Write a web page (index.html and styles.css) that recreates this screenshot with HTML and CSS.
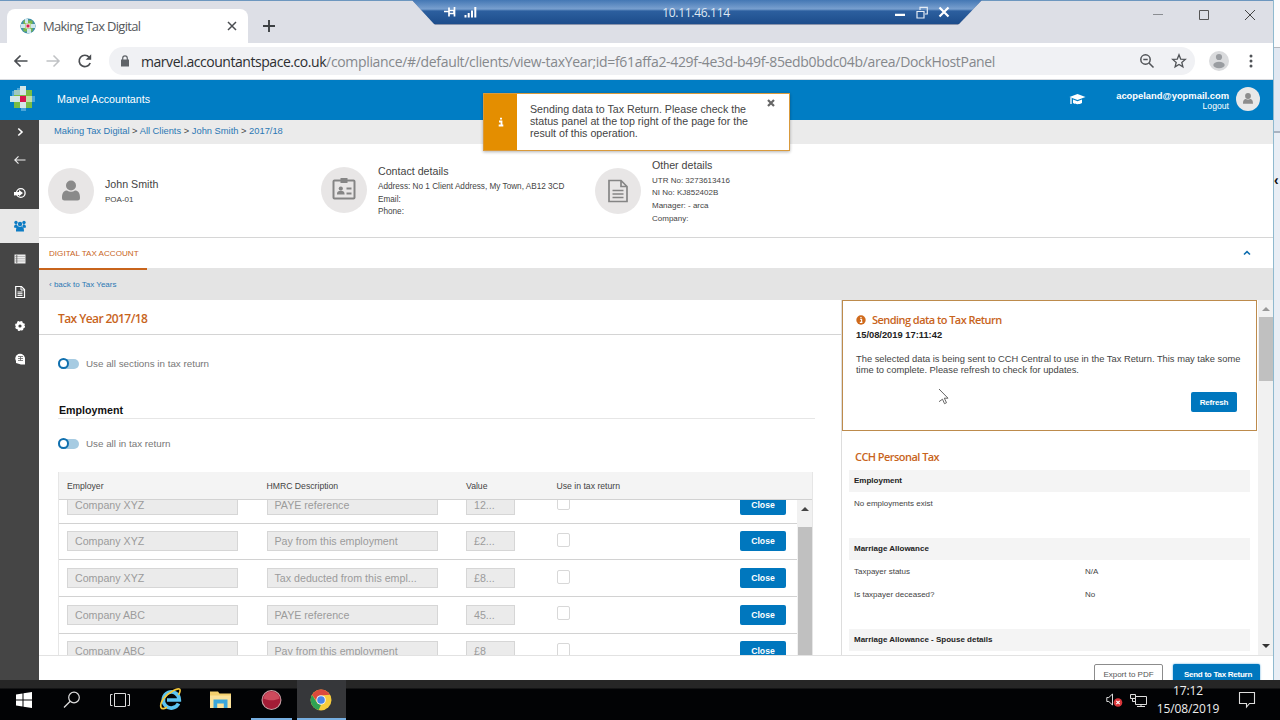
FILE: index.html
```html
<!DOCTYPE html>
<html lang="en">
<head>
    <meta charset="utf-8">
    <title>Making Tax Digital</title>
    <link rel="stylesheet" href="styles.css">
</head>
<body>
    <div class="desktop">
        <div class="window">
            <div class="tab-strip">
                <div class="browser-tab">
                    <svg class="favicon" width="16" height="16" viewBox="0 0 16 16">
                        <circle cx="8" cy="8" r="7.6" fill="#3f8fa8"/>
                        <path d="M3.500 2.500h9v11h-9z" fill="#7cb84c"/>
                        <path d="M5 1h3v4H5zM1 6h4v4H1zM11 6h4v4h-4zM7 11h4v4H7z" fill="#cfe6ee"/>
                        <path d="M5.500 5.500h5v5h-5z" fill="#f4f7ea"/>
                        <path d="M6.500 6.500h3v3h-3z" fill="#d81e50"/>
                    </svg>
                    <span class="tab-title">Making Tax Digital</span>
                    <svg width="10" height="10" viewBox="0 0 10 10"><path d="M1 1l8 8M9 1l-8 8" stroke="#4a4d51" stroke-width="1.500"/></svg>
                </div>
                <svg class="new-tab" width="14" height="14" viewBox="0 0 14 14"><path d="M7 1v12M1 7h12" stroke="#3c4043" stroke-width="1.900"/></svg>
                <div class="window-buttons">
                    <svg width="12" height="12" viewBox="0 0 12 12"><path d="M1 5.500h10" stroke="#8a8d92"/></svg>
                    <svg width="12" height="12" viewBox="0 0 12 12"><path d="M1.500 1.500h9v9h-9z" fill="none" stroke="#555"/></svg>
                    <svg width="12" height="12" viewBox="0 0 12 12"><path d="M1 1l10 10M11 1L1 11" stroke="#444"/></svg>
                </div>
            </div>

            <div class="toolbar">
                <svg class="nav-icon" width="16" height="16" viewBox="0 0 16 16"><path d="M14.500 8H2M7.500 2.500L2 8l5.500 5.500" fill="none" stroke="#4a4d51" stroke-width="1.700"/></svg>
                <svg class="nav-icon" width="16" height="16" viewBox="0 0 16 16"><path d="M1.500 8H14M8.500 2.500L14 8l-5.500 5.500" fill="none" stroke="#c0c2c5" stroke-width="1.500"/></svg>
                <svg class="nav-icon" width="16" height="16" viewBox="0 0 16 16"><path d="M13.200 10A5.700 5.700 0 1 1 12.200 4.200" fill="none" stroke="#4a4d51" stroke-width="1.700"/><path d="M14.200 1.200v5.600H8.600z" fill="#4a4d51"/></svg>
                <div class="address-bar">
                    <svg width="10" height="12" viewBox="0 0 10 12"><path d="M1 4.500h8v7H1z" fill="#5f6368"/><path d="M2.700 5V3.200a2.300 2.300 0 0 1 4.600 0V5" fill="none" stroke="#5f6368" stroke-width="1.200"/></svg>
                    <span class="url"><b>marvel.accountantspace.co.uk</b>/compliance/#/default/clients/view-taxYear;id=f61affa2-429f-4e3d-b49f-85edb0bdc04b/area/DockHostPanel</span>
                    <svg width="16" height="16" viewBox="0 0 16 16"><circle cx="6.500" cy="6.500" r="4.700" fill="none" stroke="#505357" stroke-width="1.500"/><path d="M4.300 6.500h4.400M10 10l4.500 4.500" stroke="#505357" stroke-width="1.500"/></svg>
                    <svg width="16" height="16" viewBox="0 0 16 16"><path d="M8 1.800l1.700 4.300 4.600.3-3.500 3 1.100 4.500L8 11.500l-3.900 2.400 1.100-4.500-3.500-3 4.600-.3z" fill="none" stroke="#505357" stroke-width="1.300"/></svg>
                </div>
                <svg class="profile" width="20" height="20" viewBox="0 0 20 20"><circle cx="10" cy="10" r="10" fill="#dadbdd"/><circle cx="10" cy="6" r="3.100" fill="#9a9da1"/><ellipse cx="10" cy="14" rx="5.700" ry="3.300" fill="#9a9da1"/></svg>
                <svg class="menu-dots" width="4" height="14" viewBox="0 0 4 14"><g fill="#505357"><circle cx="2" cy="2" r="1.500"/><circle cx="2" cy="7" r="1.500"/><circle cx="2" cy="12" r="1.500"/></g></svg>
            </div>

            <div class="app-header">
                <svg class="logo" width="26" height="26" viewBox="0 0 26 26">
                    <path d="M7 2h6v2h7v6h5v6h-4v6h-5v3h-5v-3H4v-6H0v-6h2V5h5z" fill="#4aa5d8"/>
                    <path d="M4 4h18v18H4z" fill="#79bd45"/>
                    <path d="M4 4h6v5H4z" fill="#9cc8c0"/>
                    <path d="M10 0h6v9h-6zM0 10h10v6H0zM10 16h6v6h-6z" fill="#d4e6e6"/>
                    <path d="M16 10h6v6h-6z" fill="#c3dfa4"/>
                    <path d="M10 10h6v6h-6z" fill="#d9174d"/>
                </svg>
                <span class="practice">Marvel Accountants</span>
                <svg class="cap" width="17" height="13" viewBox="0 0 16 13"><path d="M0 4l8-3 8 3-8 3z" fill="#fff"/><path d="M3.500 6.500L8 8.200l4.500-1.700V10c-2.500 1.600-6.500 1.600-9 0z" fill="#fff"/><path d="M1.500 4.500V11" stroke="#fff" stroke-width="1.300"/></svg>
                <div class="user">
                    <span class="user-email">acopeland@yopmail.com</span>
                    <a class="logout">Logout</a>
                </div>
                <svg width="24" height="24" viewBox="0 0 24 24"><circle cx="12" cy="12" r="12" fill="#e8e8e8"/><circle cx="12" cy="9" r="2.900" fill="#8c8c8c"/><path d="M7 16.700c0-4 1.500-4.800 3-4.800 1.200.8 2.800.8 4 0 1.500 0 3 .8 3 4.800z" fill="#8c8c8c"/></svg>
            </div>

            <div class="app-body">
                <nav class="sidebar">
                    <a class="side-item side-toggle"><svg width="12" height="12" viewBox="0 0 12 12"><path d="M4.300 2.500L8 6l-3.700 3.500" fill="none" stroke="#fff" stroke-width="1.600"/></svg></a>
                    <a class="side-item"><svg width="14" height="14" viewBox="0 0 14 14"><path d="M12.500 7H2M5.500 3.300L1.800 7l3.700 3.700" fill="none" stroke="#eee" stroke-width="1.100"/></svg></a>
                    <a class="side-item"><svg width="14" height="14" viewBox="0 0 14 14"><circle cx="7.800" cy="7" r="4.300" fill="none" stroke="#fff" stroke-width="1.300"/><path d="M1 9.500V6h5V4l4 3-4 3.200V9z" fill="#fff"/></svg></a>
                    <a class="side-item active"><svg width="14" height="14" viewBox="0 0 14 14"><g fill="#0d7cc4"><circle cx="3" cy="3.500" r="1.700"/><circle cx="11" cy="3.500" r="1.700"/><circle cx="7" cy="5" r="2.200"/><path d="M1 8.500c0-2.500 1-3.200 2.700-3.200L5 7.500 3.500 9zM13 8.500c0-2.500-1-3.200-2.700-3.200L9 7.500 10.500 9zM3 12.500c0-4 1-5 2.300-5.200 1 .7 2.400.7 3.400 0C10 7.500 11 8.500 11 12.500z"/></g></svg></a>
                    <a class="side-item"><svg width="14" height="14" viewBox="0 0 14 14"><path d="M1.500 2.500h11v9h-11z" fill="#eee"/><path d="M2 4.500h10M2 6.700h10M2 9h10" stroke="#a5a5a5" stroke-width=".7"/><path d="M3.800 3v8" stroke="#555" stroke-width=".8"/></svg></a>
                    <a class="side-item"><svg width="14" height="14" viewBox="0 0 14 14"><path d="M2.700 1.500h5.800l3 3v8H2.700z" fill="none" stroke="#fff" stroke-width="1.200"/><path d="M8 1.500V5h3.500M4.500 7h5M4.500 8.700h5M4.500 10.400h5" fill="none" stroke="#fff"/></svg></a>
                    <a class="side-item"><svg width="14" height="14" viewBox="0 0 14 14"><circle cx="7" cy="7" r="3" fill="none" stroke="#fff" stroke-width="2.800"/><circle cx="7" cy="7" r="4.300" fill="none" stroke="#fff" stroke-width="1.400" stroke-dasharray="1.900 1.480"/></svg></a>
                    <a class="side-item"><svg width="14" height="14" viewBox="0 0 14 14"><path d="M3 11V7a4.500 4.500 0 1 1 9-.5V12.500H8z" fill="#fff"/><circle cx="7" cy="6.500" r="4.700" fill="#fff"/><path d="M5 4.500h5M5 6.500h5M5 8.500h5M7.500 4.500v4" stroke="#666" stroke-width=".8"/></svg></a>
                </nav>

                <main class="main">
                    <div class="breadcrumbs"><a>Making Tax Digital</a> &gt; <a>All Clients</a> &gt; <a>John Smith</a> &gt; <a>2017/18</a></div>

                    <div class="client-details">
                        <div class="detail">
                            <svg width="46" height="46" viewBox="0 0 46 46"><circle cx="23" cy="23" r="23" fill="#e8e6e6"/><circle cx="23" cy="17.500" r="5" fill="#8a8a8a"/><path d="M14 30c0-5.500 2-7.500 5-7.500 2.500 1.700 5.500 1.700 8 0 3 0 5 2 5 7.500 0 1.700-1 2.500-2.500 2.500h-13C15 32.500 14 31.700 14 30z" fill="#8a8a8a"/></svg>
                            <div class="detail-text">
                                <h3>John Smith</h3>
                                <p>POA-01</p>
                            </div>
                        </div>
                        <div class="detail contact">
                            <svg width="46" height="46" viewBox="0 0 46 46"><circle cx="23" cy="23" r="23" fill="#e8e6e6"/><rect x="12.500" y="13.500" width="21" height="18" rx="1" fill="none" stroke="#858585" stroke-width="2"/><path d="M19.500 11h7v5h-7z" fill="#858585"/><circle cx="19.800" cy="21.500" r="2.100" fill="#858585"/><path d="M16 27.500c0-3 1.500-3.700 3.800-3.700s3.800.7 3.800 3.700zM25.500 20.500h5v2h-5zM25.500 25.500h5v2h-5z" fill="#858585"/></svg>
                            <div class="detail-text">
                                <h3>Contact details</h3>
                                <p>Address: No 1 Client Address, My Town, AB12 3CD</p>
                                <p>Email:</p>
                                <p>Phone:</p>
                            </div>
                        </div>
                        <div class="detail">
                            <svg width="46" height="46" viewBox="0 0 46 46"><circle cx="23" cy="23" r="23" fill="#e8e6e6"/><path d="M14 12.500h12l6 6v15H14zM26 12.500v6h6M17.500 22.500h11M17.500 26h11M17.500 29.500h11" fill="none" stroke="#858585" stroke-width="1.700"/></svg>
                            <div class="detail-text">
                                <h3>Other details</h3>
                                <p>UTR No: 3273613416</p>
                                <p>NI No: KJ852402B</p>
                                <p>Manager: - arca</p>
                                <p>Company:</p>
                            </div>
                        </div>
                    </div>

                    <div class="page-tabs">
                        <a class="page-tab">DIGITAL TAX ACCOUNT</a>
                        <svg width="8" height="6" viewBox="0 0 8 6"><path d="M1 4.500L4 1.700l3 2.800" fill="none" stroke="#0d6cae" stroke-width="1.600"/></svg>
                    </div>
                    <div class="back-bar"><a>‹ back to Tax Years</a></div>

                    <div class="content">
                        <section class="tax-year">
                            <h1 class="panel-title">Tax Year 2017/18</h1>
                            <div class="tax-year-body">
                                <div class="switch-row"><span class="switch"></span>Use all sections in tax return</div>
                                <h2 class="section-title">Employment</h2>
                                <div class="switch-row"><span class="switch"></span>Use all in tax return</div>

                                <div class="grid">
                                    <div class="grid-row grid-head">
                                        <span>Employer</span><span>HMRC Description</span><span>Value</span><span>Use in tax return</span>
                                    </div>
                                    <div class="grid-body">
                                        <div class="grid-rows">
                                            <div class="grid-row">
                                                <span class="field">Company XYZ</span><span class="field">PAYE reference</span><span class="field">12...</span><span class="check"></span><button class="btn btn-close">Close</button>
                                            </div>
                                            <div class="grid-row">
                                                <span class="field">Company XYZ</span><span class="field">Pay from this employment</span><span class="field">£2...</span><span class="check"></span><button class="btn btn-close">Close</button>
                                            </div>
                                            <div class="grid-row">
                                                <span class="field">Company XYZ</span><span class="field">Tax deducted from this empl...</span><span class="field">£8...</span><span class="check"></span><button class="btn btn-close">Close</button>
                                            </div>
                                            <div class="grid-row">
                                                <span class="field">Company ABC</span><span class="field">PAYE reference</span><span class="field">45...</span><span class="check"></span><button class="btn btn-close">Close</button>
                                            </div>
                                            <div class="grid-row">
                                                <span class="field">Company ABC</span><span class="field">Pay from this employment</span><span class="field">£8</span><span class="check"></span><button class="btn btn-close">Close</button>
                                            </div>
                                        </div>
                                        <div class="scrollbar grid-scroll">
                                            <span class="arrow-up dark"></span>
                                            <span class="thumb"></span>
                                        </div>
                                    </div>
                                </div>
                            </div>
                        </section>

                        <aside class="status">
                            <div class="status-box">
                                <h2 class="status-title"><svg width="10" height="10" viewBox="0 0 10 10"><circle cx="5" cy="5" r="4.700" fill="#cf6a1c"/><path d="M4 4.200h1.600v3M3.800 7.400h2.600M4.300 2.500h1.300" fill="none" stroke="#fff" stroke-width="1.100"/></svg>Sending data to Tax Return</h2>
                                <p class="status-date">15/08/2019 17:11:42</p>
                                <p class="status-text">The selected data is being sent to CCH Central to use in the Tax Return. This may take some time to complete. Please refresh to check for updates.</p>
                                <button class="btn btn-refresh">Refresh</button>
                            </div>
                            <h2 class="summary-title">CCH Personal Tax</h2>
                            <div class="summary">
                                <h3>Employment</h3>
                                <div class="summary-row"><span>No employments exist</span></div>
                            </div>
                            <div class="summary">
                                <h3>Marriage Allowance</h3>
                                <div class="summary-row"><span>Taxpayer status</span><span>N/A</span></div>
                                <div class="summary-row"><span>Is taxpayer deceased?</span><span>No</span></div>
                            </div>
                            <div class="summary">
                                <h3>Marriage Allowance - Spouse details</h3>
                            </div>
                        </aside>

                        <div class="scrollbar page-scroll">
                            <span class="arrow-up"></span>
                            <span class="thumb"></span>
                            <span class="arrow-down"></span>
                        </div>
                    </div>

                    <div class="actions">
                        <button class="btn btn-plain">Export to PDF</button>
                        <button class="btn btn-send">Send to Tax Return</button>
                    </div>
                </main>
            </div>
        </div>

        <div class="behind">
            <div class="behind-top"></div>
            <div class="behind-bar"></div>
            <div class="behind-rest">‹</div>
        </div>
    </div>

    <div class="taskbar">
        <svg class="task" width="48" height="40" viewBox="0 0 48 40"><path d="M16 14.500l6.500-1v6H16zM23.500 13.300l8.500-1.300v7.500h-8.500zM16 20.500h6.500v6l-6.500-1zM23.500 20.500H32V28l-8.500-1.300z" fill="#fff"/></svg>
        <svg class="task" width="48" height="40" viewBox="0 0 48 40"><circle cx="26" cy="17.500" r="5.300" fill="none" stroke="#ddd" stroke-width="1.200"/><path d="M22.200 21.300L16 27.500" stroke="#ddd" stroke-width="1.300"/></svg>
        <svg class="task" width="48" height="40" viewBox="0 0 48 40"><path d="M18.500 13.500h11v13h-11zM16.500 14.500h-2v11h2M31.500 14.500h2v11h-2" fill="none" stroke="#ddd"/></svg>
        <svg class="task" width="54" height="40" viewBox="0 0 54 40"><path d="M34.500 23.500a8 8 0 1 1 .8-3.500H23" fill="none" stroke="#5cc4f0" stroke-width="3.700"/><path d="M34.500 15c3.500-6.500 1-7.500-5-4.500C21 15 15.500 22.500 17 27.500c1 2 4 1 6-.5" fill="none" stroke="#f5c83a" stroke-width="1.700"/></svg>
        <svg class="task" width="48" height="40" viewBox="0 0 48 40"><path d="M12 11.500h8l1.500 2H33V28H12z" fill="#f3cf6d"/><path d="M12 15.500h21V28H12z" fill="#fbe29a"/><path d="M15.500 19.500h14V28h-3.700v-4.500h-6.600V28h-3.700z" fill="#3aa7dc"/></svg>
        <svg class="task task-open" width="41" height="40" viewBox="0 0 41 40"><circle cx="20.500" cy="21" r="10.500" fill="#c9a3a8"/><circle cx="20.500" cy="21" r="9.400" fill="#a31c36"/><path d="M12 19.500a8.600 8.600 0 0 1 17 0c-5 2.500-12 2.500-17 0z" fill="#cc4a5c"/></svg>
        <svg class="task task-open task-current" width="49" height="40" viewBox="0 0 49 40">
            <circle cx="24" cy="21" r="11" fill="#f7cc3d"/>
            <path d="M14.500 15.500L20.500 25 24 26 21.500 31.700A11 11 0 0 1 14.500 15.500z" fill="#2fa254"/>
            <path d="M14.500 15.500A11 11 0 0 1 33.500 15.500L26 16l-6 7z" fill="#dc4a3c"/>
            <circle cx="24" cy="21" r="5" fill="#f5f5f5"/><circle cx="24" cy="21" r="4" fill="#4a84e8"/>
        </svg>
        <div class="tray">
            <svg width="17" height="15" viewBox="0 0 17 15"><path d="M.8 4.500h2L6.500 1v11L2.800 8.500h-2z" fill="none" stroke="#ddd"/><circle cx="12" cy="9.500" r="4.300" fill="#d9363a"/><path d="M10.300 7.800l3.400 3.400M13.700 7.800l-3.400 3.400" stroke="#fff" stroke-width="1.100"/></svg>
            <svg width="17" height="15" viewBox="0 0 17 15"><path d="M5.500 3.500h11v8h-11zM7 13.500h8M11 11.500v2" fill="none" stroke="#ddd"/><path d="M.5 1.500h5v4h-5zM2.500 5.500V8.500H5" fill="#111" stroke="#ddd"/></svg>
            <div class="clock"><span>17:12</span><span>15/08/2019</span></div>
            <svg width="18" height="18" viewBox="0 0 18 18"><path d="M1.500 1.500h15v11h-5L8.500 16v-3.500h-7z" fill="none" stroke="#ddd" stroke-width="1.100"/></svg>
        </div>
    </div>

    <!-- remote desktop connection bar -->
    <div class="rdp-bar">
        <div class="rdp-inner">
            <svg class="rdp-pin" width="12" height="12" viewBox="0 0 12 12"><path d="M0 5.500h5M5 1.500v9M5 4.500h5v3H5M10.500 1v9.500" fill="none" stroke="#fff" stroke-width="1.700"/></svg>
            <svg width="13" height="12" viewBox="0 0 13 12"><path d="M1.500 9v2.500M4.700 7v4.500M8 4.500v7M11.300 1v10.500" stroke="#fff" stroke-width="2"/></svg>
            <span class="rdp-host">10.11.46.114</span>
            <svg width="12" height="12" viewBox="0 0 12 12"><path d="M1 8.800h10" stroke="#fff" stroke-width="2.200"/></svg>
            <svg width="12" height="13" viewBox="0 0 12 13"><path d="M1 5.500h7v6.500H1zM4 4V1.300h7.300V8H9" fill="none" stroke="#e4ecf5" stroke-width="1.200"/></svg>
            <svg width="12" height="12" viewBox="0 0 12 12"><path d="M1.500 1.500l9 9M10.500 1.500l-9 9" stroke="#fff" stroke-width="2.200"/></svg>
        </div>
    </div>

    <div class="toast">
        <div class="toast-mark"><svg width="6" height="10" viewBox="0 0 6 10"><path d="M1 4.500h2.500V9M.7 8.500h4.600M2 1.600h2" fill="none" stroke="#fff" stroke-width="1.800"/></svg></div>
        <p>Sending data to Tax Return. Please check the status panel at the top right of the page for the result of this operation.</p>
        <svg class="toast-close" width="8" height="8" viewBox="0 0 8 8"><path d="M1 1l6 6M7 1L1 7" stroke="#666" stroke-width="2.200"/></svg>
    </div>

    <svg class="cursor" width="11" height="17" viewBox="0 0 11 17"><path d="M1 1l9 9.200H6.300l2.200 4.500-2 1-2-4.500L1 13.700z" fill="#fff"/><path d="M1 1l9 9.200H6.300l2.200 4.500-2 1-2-4.500L1 13.700" fill="none" stroke="#555" stroke-width=".9"/></svg>
</body>
</html>
```
FILE: styles.css
```css
*, *::before {
    box-sizing: border-box;
}
body {
    margin: 0;
    width: 1280px;
    height: 720px;
    overflow: hidden;
    display: flex;
    flex-direction: column;
    font-family: "Liberation Sans", Arial, sans-serif;
    font-size: 8px;
    color: #444;
    background: #000;
}
h1, h2, h3, p {
    margin: 0;
}
svg {
    display: block;
    flex: none;
}
a {
    color: #2b78b4;
}
button {
    font-family: inherit;
    margin: 0;
    padding: 0;
}
.desktop {
    display: flex;
    height: 680px;
}
.window {
    width: 1273px;
    display: flex;
    flex-direction: column;
    border-top: 1px solid #6d97bf;
    background: #fff;
}

/* browser */
.tab-strip {
    height: 42px;
    display: flex;
    align-items: flex-end;
    padding: 0 17px 0 7px;
    background: #dddfe6;
}
.browser-tab {
    width: 241px;
    height: 34px;
    display: flex;
    align-items: center;
    padding: 0 11px 0 13px;
    border-radius: 8px 8px 0 0;
    background: #fff;
}
.tab-title {
    flex: 1;
    margin-left: 7px;
    font: 13px "Open Sans", "Noto Sans", sans-serif;
    letter-spacing: -0.72px;
    color: #55585c;
}
.new-tab {
    margin: 0 0 10px 14px;
}
.window-buttons {
    display: flex;
    gap: 34px;
    margin: 0 0 22px auto;
}
.toolbar {
    height: 37px;
    display: flex;
    align-items: center;
    padding: 0 20px 0 13px;
    border-bottom: 1px solid #d8dade;
}
.nav-icon {
    margin-right: 16px;
}
.address-bar {
    flex: 1;
    height: 28px;
    display: flex;
    align-items: center;
    padding: 0 8px 0 11px;
    border-radius: 14px;
    background: #f0f1f4;
}
.address-bar svg:last-child {
    margin-left: 16px;
}
.url {
    flex: 1;
    margin-left: 11px;
    white-space: nowrap;
    font: 14px "Open Sans", "Noto Sans", sans-serif;
    letter-spacing: -0.33px;
    color: #85888c;
}
.url b {
    font-weight: normal;
    letter-spacing: -0.45px;
    color: #2c2e31;
}
.profile {
    margin-left: 14px;
}
.menu-dots {
    margin-left: 20px;
}

/* app header */
.app-header {
    height: 40px;
    display: flex;
    align-items: center;
    padding: 0 13px 2px 10px;
    color: #fff;
    background: #007dc4;
}
.practice {
    flex: 1;
    margin-left: 21px;
    font-size: 10.67px;
}
.user {
    display: flex;
    flex-direction: column;
    align-items: flex-end;
    margin: 0 7px 0 30px;
    padding-top: 2px;
}
.user-email {
    font-size: 9.4px;
    line-height: 11px;
    font-weight: bold;
}
.logout {
    font-size: 8.67px;
    line-height: 10px;
    color: #fff;
}
.app-body {
    flex: 1;
    min-height: 0;
    display: flex;
}
.sidebar {
    width: 39px;
    padding-top: 1px;
    background: #454545;
}
.side-item {
    height: 33.2px;
    display: flex;
    align-items: center;
    justify-content: center;
}
.side-toggle {
    height: 22px;
}
.side-item.active {
    background: #e8e8e8;
}
.main {
    flex: 1;
    min-width: 0;
    display: flex;
    flex-direction: column;
}
.main > * {
    flex: none;
}
.breadcrumbs {
    height: 24px;
    padding-left: 15px;
    font-size: 9.33px;
    line-height: 23px;
    background: #ebebeb;
}
.client-details {
    height: 94px;
    display: grid;
    grid-template-columns: 273px 274px 1fr;
    align-items: center;
    padding-left: 9px;
    border-bottom: 1px solid #d6d6d6;
}
.detail {
    display: flex;
    align-items: center;
    gap: 11px;
}
.detail h3 {
    margin-bottom: 1px;
    font-size: 10.67px;
    line-height: 17px;
    font-weight: normal;
}
.detail p {
    font-size: 8px;
    line-height: 12.67px;
}
.contact p {
    font-size: 8.2px;
}
.detail-text {
    padding-top: 1px;
}
.page-tabs {
    height: 30px;
    display: flex;
    align-items: center;
    justify-content: space-between;
    padding-right: 22px;
}
.page-tab {
    height: 32px;
    padding: 0 8px 0 10px;
    margin-top: 2px;
    font-size: 8.1px;
    line-height: 31px;
    color: #c8641c;
    border-bottom: 2px solid #c8641c;
    z-index: 1;
}
.back-bar {
    height: 32px;
    padding-left: 10px;
    line-height: 33px;
    background: #e4e4e4;
}
.content {
    height: 356px;
    display: flex;
    overflow: hidden;
    border-bottom: 1px solid #e2e2e2;
}

/* tax year panel */
.tax-year {
    width: 803px;
    border-right: 1px solid #ddd;
}
.panel-title {
    height: 35px;
    padding-left: 19px;
    border-bottom: 1px solid #d4d4d4;
    font: 600 12px/37px "Open Sans", "Noto Sans", sans-serif;
    letter-spacing: -0.58px;
    color: #c8641c;
}
.tax-year-body {
    padding: 23px 26px 0 19px;
}
.switch-row {
    display: flex;
    align-items: center;
    gap: 7px;
    height: 11px;
    font-size: 9.8px;
    color: #777;
}
.switch {
    width: 21px;
    height: 10px;
    display: flex;
    align-items: center;
    border-radius: 5px;
    background: #a6cbe2;
}
.switch::before {
    content: "";
    width: 11px;
    height: 11px;
    flex: none;
    border: 2px solid #0f6fae;
    border-radius: 50%;
    background: #fff;
}
.section-title {
    margin: 33px 0 19px;
    padding-left: 1px;
    height: 17px;
    font-size: 10.67px;
    line-height: 16px;
    color: #111;
    border-bottom: 1px solid #e6e6e6;
}
.grid {
    width: 755px;
    margin-top: 23px;
    border-left: 1px solid #e6e6e6;
    border-right: 1px solid #e6e6e6;
}
.grid-row {
    height: 36.67px;
    display: grid;
    grid-template-columns: 171px 171px 49px 13px 46px;
    column-gap: 28.5px;
    align-items: center;
    padding-left: 8px;
    border-bottom: 1px solid #d2d2d2;
}
.grid-row > :nth-child(4) {
    margin-left: 13px;
    white-space: nowrap;
}
.grid-row > :nth-child(5) {
    margin-left: 155px;
}
.grid-head {
    height: 28px;
    font-size: 8.67px;
    background: #f4f4f4;
}
.grid-body {
    height: 156px;
    display: flex;
    overflow: hidden;
}
.grid-rows {
    width: 738px;
    margin-top: -13px;
}
.field {
    height: 20px;
    padding-left: 7px;
    border: 1px solid #d6d6d6;
    font-size: 10.67px;
    line-height: 18px;
    white-space: nowrap;
    color: #9b9b9b;
    background: #ebebeb;
}
.check {
    width: 13px;
    height: 14px;
    margin-top: -3px;
    border: 1px solid #d8d8d8;
    border-radius: 2px;
    background: #fff;
}
.btn {
    border: 0;
    border-radius: 2px;
    font-size: 8px;
    font-weight: bold;
    color: #fff;
    background: #0077be;
}
.btn-close {
    width: 46px;
    height: 20px;
    font-size: 8.67px;
}
.scrollbar {
    width: 15px;
    display: flex;
    flex-direction: column;
    align-items: center;
    background: #f1f1f1;
}
.thumb {
    width: 14px;
    background: #c0c0c0;
}
.arrow-up, .arrow-down {
    border: 4px solid transparent;
}
.arrow-up {
    border-top: 0;
    border-bottom-color: #999;
}
.arrow-up.dark {
    border-bottom-color: #444;
}
.arrow-down {
    border-bottom: 0;
    border-top-color: #333;
}
.grid-scroll {
    gap: 16px;
    padding-top: 7px;
}
.grid-scroll .thumb {
    flex: 1;
}
.page-scroll {
    margin-left: 1px;
    padding: 7px 0;
    gap: 6px;
}
.page-scroll .thumb {
    height: 64px;
}
.page-scroll .arrow-down {
    margin-top: auto;
}

/* status panel */
.status {
    width: 415px;
}
.status-box {
    height: 131px;
    padding: 12px 13px 0;
    border: 1px solid #bd8b4c;
}
.status-title, .summary-title {
    font: 600 11px/13px "Open Sans", "Noto Sans", sans-serif;
    letter-spacing: -0.55px;
    color: #c8641c;
}
.status-title {
    display: flex;
    align-items: center;
    gap: 6px;
}
.status-date {
    margin-top: 4px;
    font-size: 9.33px;
    line-height: 11px;
    font-weight: bold;
    color: #222;
}
.status-text {
    margin-top: 13px;
    font-size: 9.33px;
    line-height: 11px;
}
.btn-refresh {
    display: block;
    width: 46px;
    height: 20px;
    margin: 16px 6px 0 auto;
    letter-spacing: -0.2px;
}
.summary-title {
    margin: 19px 0 7px 13px;
}
.summary {
    margin: 0 7px;
    height: 68px;
}
.summary + .summary {
    height: 91px;
}
.summary h3 {
    height: 22px;
    padding-left: 5px;
    font-size: 8px;
    line-height: 22px;
    color: #222;
    background: #f4f4f4;
}
.summary-row {
    display: grid;
    grid-template-columns: 231px 1fr;
    height: 22.67px;
    padding-left: 5px;
    line-height: 24px;
}
.actions {
    height: 24px;
    display: flex;
    justify-content: flex-end;
    gap: 10px;
    padding: 8px 13px 0 0;
    overflow: hidden;
}
.btn-plain {
    width: 69px;
    height: 20px;
    border: 1px solid #8c8c8c;
    font-weight: normal;
    color: #555;
    background: #fff;
}
.btn-send {
    width: 87px;
    height: 20px;
    letter-spacing: -0.25px;
    padding-left: 3px;
    box-shadow: 0 0 2px #3f9ed8;
}

/* window showing behind the remote session */
.behind {
    width: 7px;
    display: flex;
    flex-direction: column;
    border-left: 1px solid #8fb9cf;
    background: #e9eef5;
}
.behind-top {
    height: 48px;
    border-bottom: 1px solid #b5b9bf;
    background: #fbfbfc;
}
.behind-bar {
    height: 85px;
    border-bottom: 2px solid #a9b3c1;
    background: #e1e8f2;
}
.behind-rest {
    padding-top: 39px;
    font: bold 14px/16px "Liberation Sans", sans-serif;
    color: #111;
}

/* taskbar */
.taskbar {
    height: 40px;
    display: flex;
    background: linear-gradient(#262626 8px, #020305 9px);
}
.task-open {
    margin-left: 5px;
    border-bottom: 2px solid #76aee0;
}
.task-current {
    background: #36373a;
}
.tray {
    display: flex;
    align-items: center;
    gap: 7px;
    margin-left: auto;
    padding-right: 24px;
}
.clock {
    width: 64px;
    margin: 0 11px 0 2px;
    display: flex;
    flex-direction: column;
    align-items: center;
    font: 12px/18px "Open Sans", "Noto Sans", sans-serif;
    letter-spacing: -0.1px;
    color: #eee;
}

/* overlays */
.rdp-bar {
    position: absolute;
    left: 412px;
    top: 0;
    width: 570px;
    height: 25px;
    background: #8a94ac;
    clip-path: polygon(0 0, 100% 0, 546px 100%, 23px 100%);
}
.rdp-inner {
    height: 24px;
    display: flex;
    align-items: center;
    gap: 10px;
    padding: 0 32px;
    background: linear-gradient(#4477b4, #79a0cf 9px, #2c5f9f 11px, #1d4d8b);
}
.rdp-pin {
    margin-right: -2px;
}
.rdp-host {
    flex: 1;
    padding-left: 21px;
    text-align: center;
    font: 12px "Open Sans", "Noto Sans", sans-serif;
    letter-spacing: -0.3px;
    color: #dfe8f4;
}
.toast {
    position: absolute;
    left: 483px;
    top: 93px;
    width: 307px;
    height: 58px;
    display: flex;
    border: 1px solid #d99a3c;
    background: #fff;
    box-shadow: 0 1px 3px rgba(0, 0, 0, 0.3);
}
.toast-mark {
    width: 33px;
    display: flex;
    align-items: center;
    justify-content: center;
    background: #e48e00;
}
.toast p {
    flex: 1;
    padding: 9px 0 0 13px;
    font-size: 10.67px;
    line-height: 12px;
}
.toast-close {
    margin: 5px 14px 0 10px;
}
.cursor {
    position: absolute;
    left: 938px;
    top: 388px;
}
```
